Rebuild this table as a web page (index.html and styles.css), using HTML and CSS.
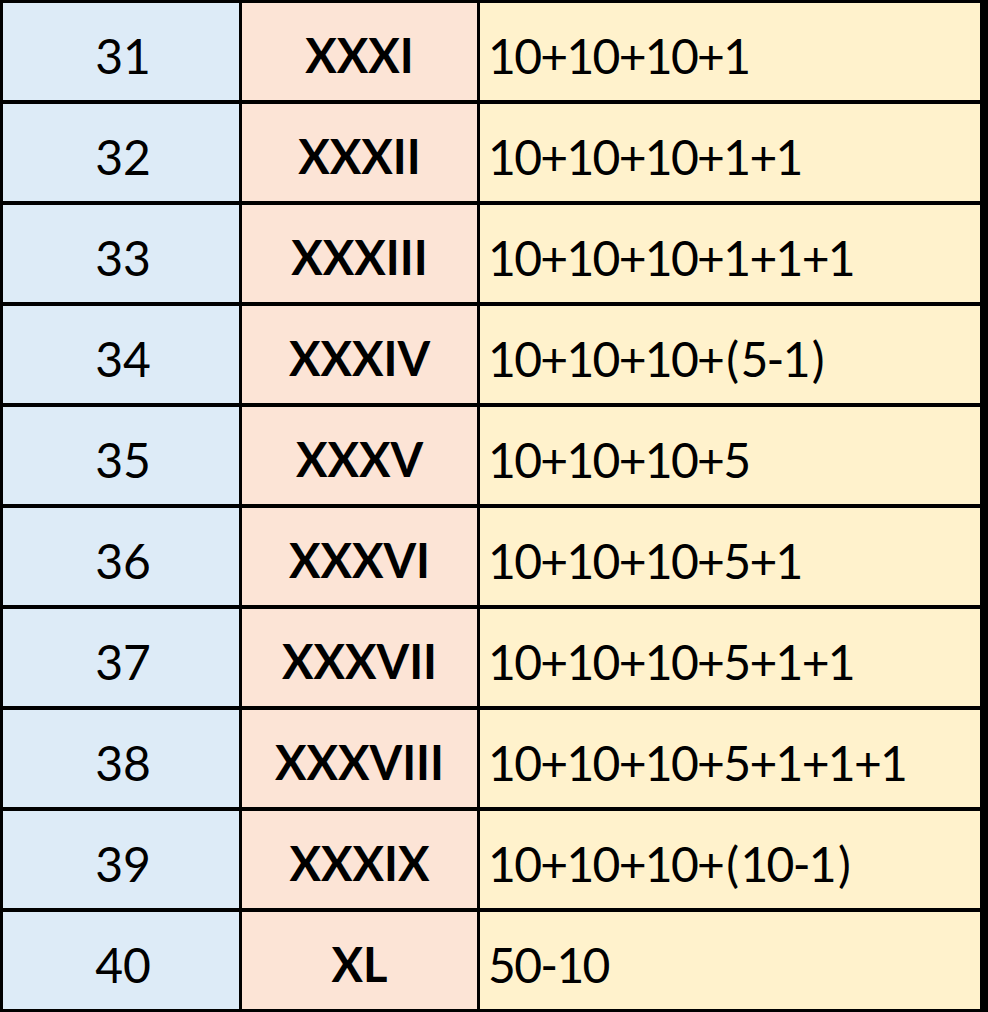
FILE: index.html
```html
<!DOCTYPE html>
<html lang="en">
<head>
<meta charset="utf-8">
<title>Roman numerals 31-40</title>
<link rel="stylesheet" href="styles.css">
</head>
<body>
<div class="table">
  <div class="cell num">31</div><div class="cell roman">XXXI</div><div class="cell expr">10+10+10+1</div>
  <div class="cell num">32</div><div class="cell roman">XXXII</div><div class="cell expr">10+10+10+1+1</div>
  <div class="cell num">33</div><div class="cell roman">XXXIII</div><div class="cell expr">10+10+10+1+1+1</div>
  <div class="cell num">34</div><div class="cell roman">XXXIV</div><div class="cell expr">10+10+10+<span class="p">(</span>5-1<span class="p">)</span></div>
  <div class="cell num">35</div><div class="cell roman">XXXV</div><div class="cell expr">10+10+10+5</div>
  <div class="cell num">36</div><div class="cell roman">XXXVI</div><div class="cell expr">10+10+10+5+1</div>
  <div class="cell num">37</div><div class="cell roman">XXXVII</div><div class="cell expr">10+10+10+5+1+1</div>
  <div class="cell num">38</div><div class="cell roman">XXXVIII</div><div class="cell expr">10+10+10+5+1+1+1</div>
  <div class="cell num">39</div><div class="cell roman">XXXIX</div><div class="cell expr">10+10+10+<span class="p">(</span>10-1<span class="p">)</span></div>
  <div class="cell num">40</div><div class="cell roman">XL</div><div class="cell expr">50-10</div>
</div>
</body>
</html>
```
FILE: styles.css
```css
html, body {
  margin: 0;
  padding: 0;
  background: #000;
}
body {
  width: 988px;
  height: 1012px;
  overflow: hidden;
}
.table {
  box-sizing: border-box;
  width: 988px;
  height: 1012px;
  padding: 3px 8px 3px 3px;
  display: grid;
  grid-template-columns: 236px 235px 1fr;
  grid-auto-rows: 97px;
  column-gap: 3px;
  row-gap: 4px;
  font-family: Lato, "Open Sans", sans-serif;
  font-size: 48px;
  color: #000;
}
.cell {
  display: flex;
  align-items: center;
  padding-top: 7px;
  box-sizing: border-box;
  white-space: nowrap;
}
.num {
  background: #ddebf7;
  justify-content: center;
  padding-left: 4px;
}
.roman {
  background: #fce4d6;
  justify-content: center;
  font-weight: 700;
  font-size: 47px;
}
.expr {
  background: #fff2cc;
  padding-left: 8px;
  letter-spacing: -1.7px;
}
.p {
  margin: 0 3px;
}
```
